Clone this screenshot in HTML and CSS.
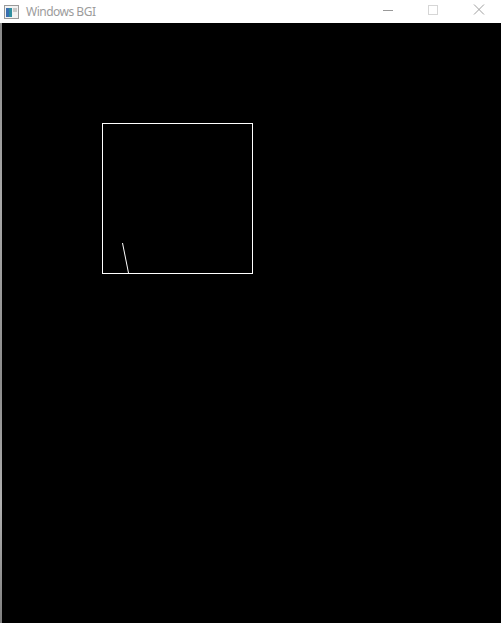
FILE: index.html
```html
<!DOCTYPE html>
<html>
<head>
<meta charset="utf-8">
<link rel="stylesheet" href="styles.css">
</head>
<body>
<div class="window">
  <div class="titlebar">
    <div class="app-icon">
      <svg width="16" height="14" viewBox="0 0 16 14">
        <rect x="0.5" y="0.5" width="14" height="13" fill="#f2f2f2" stroke="#9a9a9a"/>
        <rect x="2" y="3" width="6" height="9" fill="#2f8f9f"/>
        <rect x="2" y="3" width="3" height="9" fill="#3a6fb0"/>
        <rect x="9" y="3" width="4" height="4" fill="#c8c8c8"/>
      </svg>
    </div>
    <div class="title">Windows BGI</div>
    <div class="controls">
      <div class="ctl">
        <svg width="46" height="23" viewBox="0 0 46 23"><line x1="20" y1="10.5" x2="30" y2="10.5" stroke="#999" stroke-width="1"/></svg>
      </div>
      <div class="ctl">
        <svg width="46" height="23" viewBox="0 0 46 23"><rect x="19.5" y="5.5" width="9" height="9" fill="none" stroke="#d6d6d6" stroke-width="1"/></svg>
      </div>
      <div class="ctl">
        <svg width="46" height="23" viewBox="0 0 46 23"><path d="M19 4.5 L29 14.5 M29 4.5 L19 14.5" stroke="#a0a0a0" stroke-width="1" fill="none"/></svg>
      </div>
    </div>
  </div>
  <div class="client">
    <div class="edge"></div>
    <div class="canvas">
      <svg class="drawing" width="499" height="600" viewBox="0 0 499 600">
        <rect x="100.5" y="100.5" width="150" height="150" fill="none" stroke="#fff" stroke-width="1" shape-rendering="crispEdges"/>
        <line x1="120.5" y1="220" x2="126.5" y2="250" stroke="#fff" stroke-width="1"/>
      </svg>
    </div>
  </div>
</div>
</body>
</html>
```

FILE: styles.css
```css
html, body {
  margin: 0;
  padding: 0;
  width: 501px;
  height: 623px;
  overflow: hidden;
  background: #000;
}
.window {
  display: flex;
  flex-direction: column;
  width: 501px;
  height: 623px;
}
.titlebar {
  height: 23px;
  background: #fff;
  display: flex;
  align-items: center;
  flex: none;
}
.app-icon {
  width: 16px;
  height: 14px;
  margin-left: 4px;
  margin-top: 1px;
  display: flex;
}
.title {
  margin-left: 6px;
  font-family: "Noto Sans", "Open Sans", sans-serif;
  font-size: 12px;
  letter-spacing: -0.5px;
  color: #9c9c9c;
  line-height: 23px;
  flex: 1;
}
.controls {
  display: flex;
  height: 23px;
}
.ctl {
  width: 46px;
  height: 23px;
  display: flex;
}
.client {
  flex: 1;
  display: flex;
}
.edge {
  width: 2px;
  background: linear-gradient(#8a8a8a, #a8a8a8 30%, #8c8c8c 60%, #b0b0b0 80%, #808080);
  flex: none;
}
.canvas {
  flex: 1;
  background: #000;
  overflow: hidden;
}
.drawing {
  display: block;
}
```
